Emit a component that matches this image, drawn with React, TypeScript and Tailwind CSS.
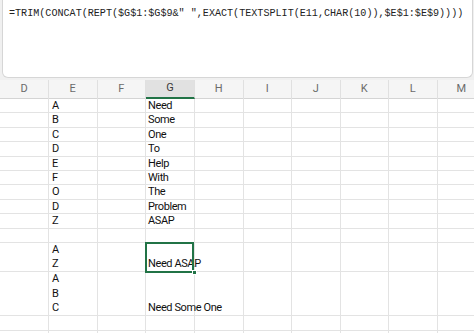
import React from 'react';

const cols = ['D', 'E', 'F', 'G', 'H', 'I', 'J', 'K', 'L', 'M'];

// rows: height, E value(s), G value
const rows: { h: string; e: string[]; g: string }[] = [
  { h: 'h-[14.4px]', e: ['A'], g: 'Need' },
  { h: 'h-[14.4px]', e: ['B'], g: 'Some' },
  { h: 'h-[14.4px]', e: ['C'], g: 'One' },
  { h: 'h-[14.4px]', e: ['D'], g: 'To' },
  { h: 'h-[14.4px]', e: ['E'], g: 'Help' },
  { h: 'h-[14.4px]', e: ['F'], g: 'With' },
  { h: 'h-[14.4px]', e: ['O'], g: 'The' },
  { h: 'h-[14.4px]', e: ['D'], g: 'Problem' },
  { h: 'h-[14.4px]', e: ['Z'], g: 'ASAP' },
  { h: 'h-[14.4px]', e: [], g: '' },
  { h: 'h-[29px]', e: ['A', 'Z'], g: 'Need ASAP' },
  { h: 'h-[44.5px]', e: ['A', 'B', 'C'], g: 'Need Some One' },
  { h: 'h-[14.4px]', e: [], g: '' },
  { h: 'h-[14.4px]', e: [], g: '' },
];

const grid = 'grid grid-cols-[49px_48.5px_48.5px_49px_48.5px_48.5px_48.5px_48.5px_48.5px_48.5px]';

export default function App() {
  return (
    <div className="w-[474px] h-[333px] overflow-hidden bg-white font-['Roboto',sans-serif]">
      {/* Formula bar */}
      <div className="h-[80px] bg-[#f0f0f0] pl-[2px] pr-[1px]">
        <div className="h-[78px] bg-white border-x border-b border-[#d6d6d6] rounded-b-[6px] pl-[6px] pt-[6px]">
          <div className="font-['Liberation_Mono',monospace] text-[10.1px] leading-[16px] text-[#222] whitespace-nowrap">
            =TRIM(CONCAT(REPT($G$1:$G$9&amp;" ",EXACT(TEXTSPLIT(E11,CHAR(10)),$E$1:$E$9))))
          </div>
        </div>
      </div>

      {/* Column headers */}
      <div className={`${grid} h-[19px] bg-[#f5f5f5] border-b border-[#d4d4d4]`}>
        {cols.map((c) => (
          <div
            key={c}
            className={`flex items-center justify-center text-[11px] border-r border-[#e0e0e0] ${
              c === 'G' ? 'bg-[#e1e1e1] text-[#3a3a3a] border-b-2 border-b-[#217346]' : 'text-[#6b6b6b]'
            }`}
          >
            {c}
          </div>
        ))}
      </div>

      {/* Cells */}
      {rows.map((r, i) => (
        <div key={i} className={`${grid} ${r.h} border-b border-[#e3e3e3]`}>
          {cols.map((c) => {
            const selected = c === 'G' && i === 10;
            return (
              <div
                key={c}
                className={`relative flex flex-col justify-end border-r border-[#e3e3e3] text-[11px] leading-[14.4px] text-[#111] ${
                  c === 'E' ? 'pl-[3px]' : 'pl-[2px]'
                } ${selected ? 'z-10' : ''}`}
              >
                {c === 'E' && r.e.map((v, k) => <span key={k}>{v}</span>)}
                {c === 'G' && r.g && (
                  <span className="whitespace-nowrap tracking-[-0.4px]">{r.g}</span>
                )}
                {selected && (
                  <>
                    <div className="absolute -left-[1px] -top-[1px] right-0 -bottom-[1px] border-2 border-[#217346]" />
                    <div className="absolute -right-[3px] -bottom-[3px] w-[5px] h-[5px] bg-[#217346] border border-white" />
                  </>
                )}
              </div>
            );
          })}
        </div>
      ))}
    </div>
  );
}
